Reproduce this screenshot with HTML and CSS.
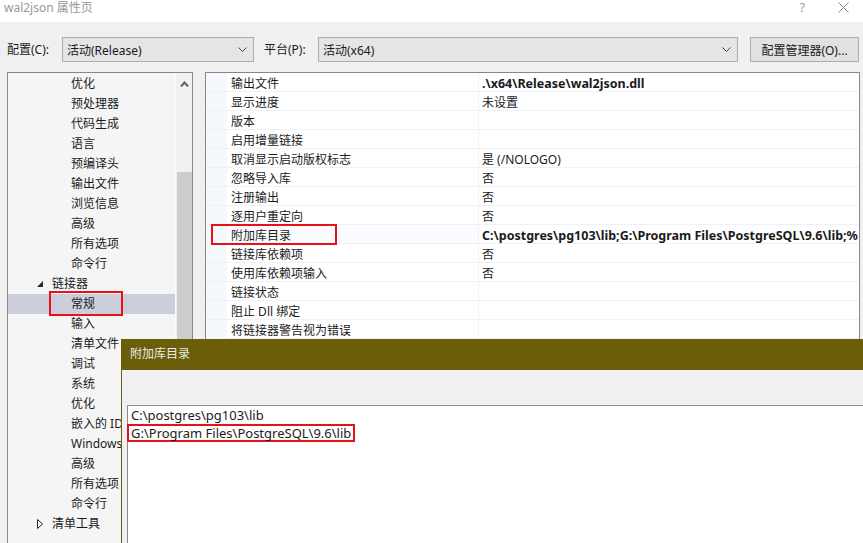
FILE: index.html
```html
<!DOCTYPE html>
<html lang="zh-CN">
  <head>
    <meta charset="UTF-8" />
    <title>wal2json 属性页</title>
    <link rel="stylesheet" href="styles.css">
  </head>
  <body>
    <div class="window">
      <div class="titlebar">
        <span class="title">wal2json 属性页</span>
        <span class="caption-btn help">?</span>
        <svg class="caption-btn close" width="11" height="11" viewBox="0 0 11 11">
          <path d="M0.5 0.5 L10.5 10.5 M10.5 0.5 L0.5 10.5" stroke="#8a8a8a" stroke-width="1" fill="none" />
        </svg>
      </div>

      <div class="toolbar">
        <label class="field-label first">配置(C):</label>
        <div class="combo combo-config">
          <span>活动(Release)</span>
          <svg width="9" height="5" viewBox="0 0 9 5"><path d="M0.5 0.5 L4.5 4.5 L8.5 0.5" stroke="#444" fill="none" /></svg>
        </div>
        <label class="field-label second">平台(P):</label>
        <div class="combo combo-platform">
          <span>活动(x64)</span>
          <svg width="9" height="5" viewBox="0 0 9 5"><path d="M0.5 0.5 L4.5 4.5 L8.5 0.5" stroke="#444" fill="none" /></svg>
        </div>
        <button class="btn">配置管理器(O)...</button>
      </div>

      <div class="content">
        <div class="tree">
          <ul class="tree-list">
            <li class="child">优化</li>
            <li class="child">预处理器</li>
            <li class="child">代码生成</li>
            <li class="child">语言</li>
            <li class="child">预编译头</li>
            <li class="child">输出文件</li>
            <li class="child">浏览信息</li>
            <li class="child">高级</li>
            <li class="child">所有选项</li>
            <li class="child">命令行</li>
            <li class="parent">
              <svg class="twisty" width="6" height="6" viewBox="0 0 6 6"><polygon points="6,0 6,6 0,6" fill="#262626" /></svg>
              链接器
            </li>
            <li class="child selected">常规<span class="mark mark-tree"></span></li>
            <li class="child">输入</li>
            <li class="child">清单文件</li>
            <li class="child">调试</li>
            <li class="child">系统</li>
            <li class="child">优化</li>
            <li class="child">嵌入的 IDL</li>
            <li class="child">Windows 元数据</li>
            <li class="child">高级</li>
            <li class="child">所有选项</li>
            <li class="child">命令行</li>
            <li class="parent">
              <svg class="twisty" width="6" height="10" viewBox="0 0 6 10"><polygon points="0.5,0.5 5.5,5 0.5,9.5" fill="none" stroke="#262626" /></svg>
              清单工具
            </li>
          </ul>
          <div class="scrollbar">
            <svg class="arrow-up" width="9" height="6" viewBox="0 0 9 6"><path d="M1 5.5 L4.5 1.5 L8 5.5" stroke="#606060" stroke-width="2" fill="none" /></svg>
            <div class="thumb"></div>
          </div>
        </div>

        <div class="grid">
          <div class="row"><div class="gutter"></div><div class="name">输出文件</div><div class="value bold">.\x64\Release\wal2json.dll</div></div>
          <div class="row"><div class="gutter"></div><div class="name">显示进度</div><div class="value">未设置</div></div>
          <div class="row"><div class="gutter"></div><div class="name">版本</div><div class="value"></div></div>
          <div class="row"><div class="gutter"></div><div class="name">启用增量链接</div><div class="value"></div></div>
          <div class="row"><div class="gutter"></div><div class="name">取消显示启动版权标志</div><div class="value">是 (/NOLOGO)</div></div>
          <div class="row"><div class="gutter"></div><div class="name">忽略导入库</div><div class="value">否</div></div>
          <div class="row"><div class="gutter"></div><div class="name">注册输出</div><div class="value">否</div></div>
          <div class="row"><div class="gutter"></div><div class="name">逐用户重定向</div><div class="value">否</div></div>
          <div class="row current"><div class="gutter"></div><div class="name">附加库目录<span class="mark mark-grid"></span></div><div class="value bold">C:\postgres\pg103\lib;G:\Program Files\PostgreSQL\9.6\lib;%</div></div>
          <div class="row"><div class="gutter"></div><div class="name">链接库依赖项</div><div class="value">否</div></div>
          <div class="row"><div class="gutter"></div><div class="name">使用库依赖项输入</div><div class="value">否</div></div>
          <div class="row"><div class="gutter"></div><div class="name">链接状态</div><div class="value"></div></div>
          <div class="row"><div class="gutter"></div><div class="name">阻止 Dll 绑定</div><div class="value"></div></div>
          <div class="row"><div class="gutter"></div><div class="name">将链接器警告视为错误</div><div class="value"></div></div>
          <div class="row"><div class="gutter"></div><div class="name"></div><div class="value"></div></div>
        </div>
      </div>

      <!-- child dialog opened from the 附加库目录 row -->
      <div class="dialog">
        <div class="dialog-title">附加库目录</div>
        <div class="dialog-body">
          <div class="editbox">
            <div class="line">C:\postgres\pg103\lib</div>
            <div class="line"><span class="line-mark">G:\Program Files\PostgreSQL\9.6\lib</span></div>
          </div>
        </div>
      </div>
    </div>
  </body>
</html>
```

FILE: styles.css
```css
* {
  box-sizing: border-box;
}

html,
body {
  margin: 0;
  padding: 0;
  height: 100%;
  overflow: hidden;
}

body {
  font-family: "Noto Sans", "Noto Sans CJK SC", sans-serif;
  font-size: 12px;
  color: #1b1b1b;
  background-color: #f0f0f0;
}

.window {
  position: relative;
  display: flex;
  flex-direction: column;
  height: 100%;
  overflow: hidden;
}

/* caption */
.titlebar {
  height: 22px;
  background-color: #ffffff;
  display: flex;
  align-items: flex-start;
  padding: 0 14px 0 4px;
  color: #999999;
}

.title {
  flex: 1;
  line-height: 16px;
}

.caption-btn.help {
  line-height: 15px;
  font-size: 12px;
  margin-right: 33px;
}

.caption-btn.close {
  margin-top: 2px;
}

/* configuration / platform bar */
.toolbar {
  height: 46px;
  display: flex;
  align-items: flex-start;
  padding: 15px 0 0 7px;
}

.field-label {
  line-height: 25px;
}

.field-label.first {
  width: 55px;
}

.field-label.second {
  width: 54px;
  margin-left: 10px;
}

.combo {
  height: 25px;
  display: flex;
  align-items: center;
  justify-content: space-between;
  padding: 0 6px 0 4px;
  background-color: #e5e5e5;
  border: 1px solid #adadad;
}

.combo-config {
  width: 192px;
}

.combo-platform {
  width: 420px;
}

.btn {
  margin-left: 12px;
  width: 109px;
  height: 25px;
  padding: 0;
  font: inherit;
  color: inherit;
  background-color: #e1e1e1;
  border: 1px solid #adadad;
}

/* tree + property grid */
.content {
  flex: 1;
  display: flex;
  padding: 4px 3px 0 7px;
  min-height: 0;
}

.tree {
  width: 186px;
  display: flex;
  border: 1px solid #828790;
  border-bottom: none;
  background-color: #f5f5f5;
}

.tree-list {
  flex: 1;
  list-style: none;
  margin: 0;
  padding: 1px 0 0;
}

.tree-list li {
  position: relative;
  height: 20px;
  line-height: 20px;
  white-space: nowrap;
}

.tree-list .child {
  padding-left: 63px;
}

.tree-list .parent {
  padding-left: 29px;
  display: flex;
  align-items: center;
  gap: 9px;
}

.tree-list .selected {
  background-color: #cccedb;
}

.scrollbar {
  width: 17px;
  background-color: #f0f0f0;
  border-left: 1px solid #fafafa;
  display: flex;
  flex-direction: column;
  align-items: center;
}

.arrow-up {
  margin-top: 8px;
}

.thumb {
  margin-top: 85px;
  width: 15px;
  height: 200px;
  background-color: #cdcdcd;
}

.grid {
  flex: 1;
  margin-left: 12px;
  border: 1px solid #828790;
  border-bottom: none;
  background-color: #ffffff;
}

.row {
  display: flex;
  height: 19px;
  line-height: 21px;
  border-bottom: 1px solid #eef1f7;
}

.gutter {
  width: 21px;
  background-color: #f5f8fc;
}

.name {
  position: relative;
  width: 252px;
  padding-left: 4px;
  border-right: 1px solid #eef1f7;
  white-space: nowrap;
}

.row.current .name {
  background-color: #fbfcfe;
}

.value {
  flex: 1;
  padding-left: 3px;
  white-space: nowrap;
  overflow: hidden;
}

.bold {
  font-weight: 700;
  font-size: 12.5px;
}

/* red annotation frames */
.mark {
  position: absolute;
  border: 2px solid #e8101a;
  pointer-events: none;
}

.mark-tree {
  left: 41px;
  top: -3px;
  width: 74px;
  height: 25px;
}

.mark-grid {
  left: -16px;
  top: -1px;
  width: 126px;
  height: 21px;
}

/* directory editor dialog */
.dialog {
  position: absolute;
  left: 121px;
  top: 339px;
  right: 0;
  bottom: 0;
  display: flex;
  flex-direction: column;
  border-left: 1px solid #6a5e0b;
  background-color: #f0f0f0;
}

.dialog-title {
  height: 31px;
  line-height: 30px;
  padding-left: 8px;
  background-color: #6a5e0b;
  color: #ecebe4;
}

.dialog-body {
  flex: 1;
  display: flex;
  padding: 35px 0 0 5px;
}

.editbox {
  flex: 1;
  background-color: #ffffff;
  border-top: 1px solid #8b8b93;
  border-left: 1px solid #8b8b93;
  padding: 0 0 0 3px;
  font-size: 13px;
}

.line {
  height: 18px;
  line-height: 18px;
  white-space: nowrap;
}

.line-mark {
  display: inline-block;
  height: 18px;
  line-height: 14px;
  margin-left: -4px;
  padding: 0 2px 0 2px;
  border: 2px solid #e8101a;
}
```
